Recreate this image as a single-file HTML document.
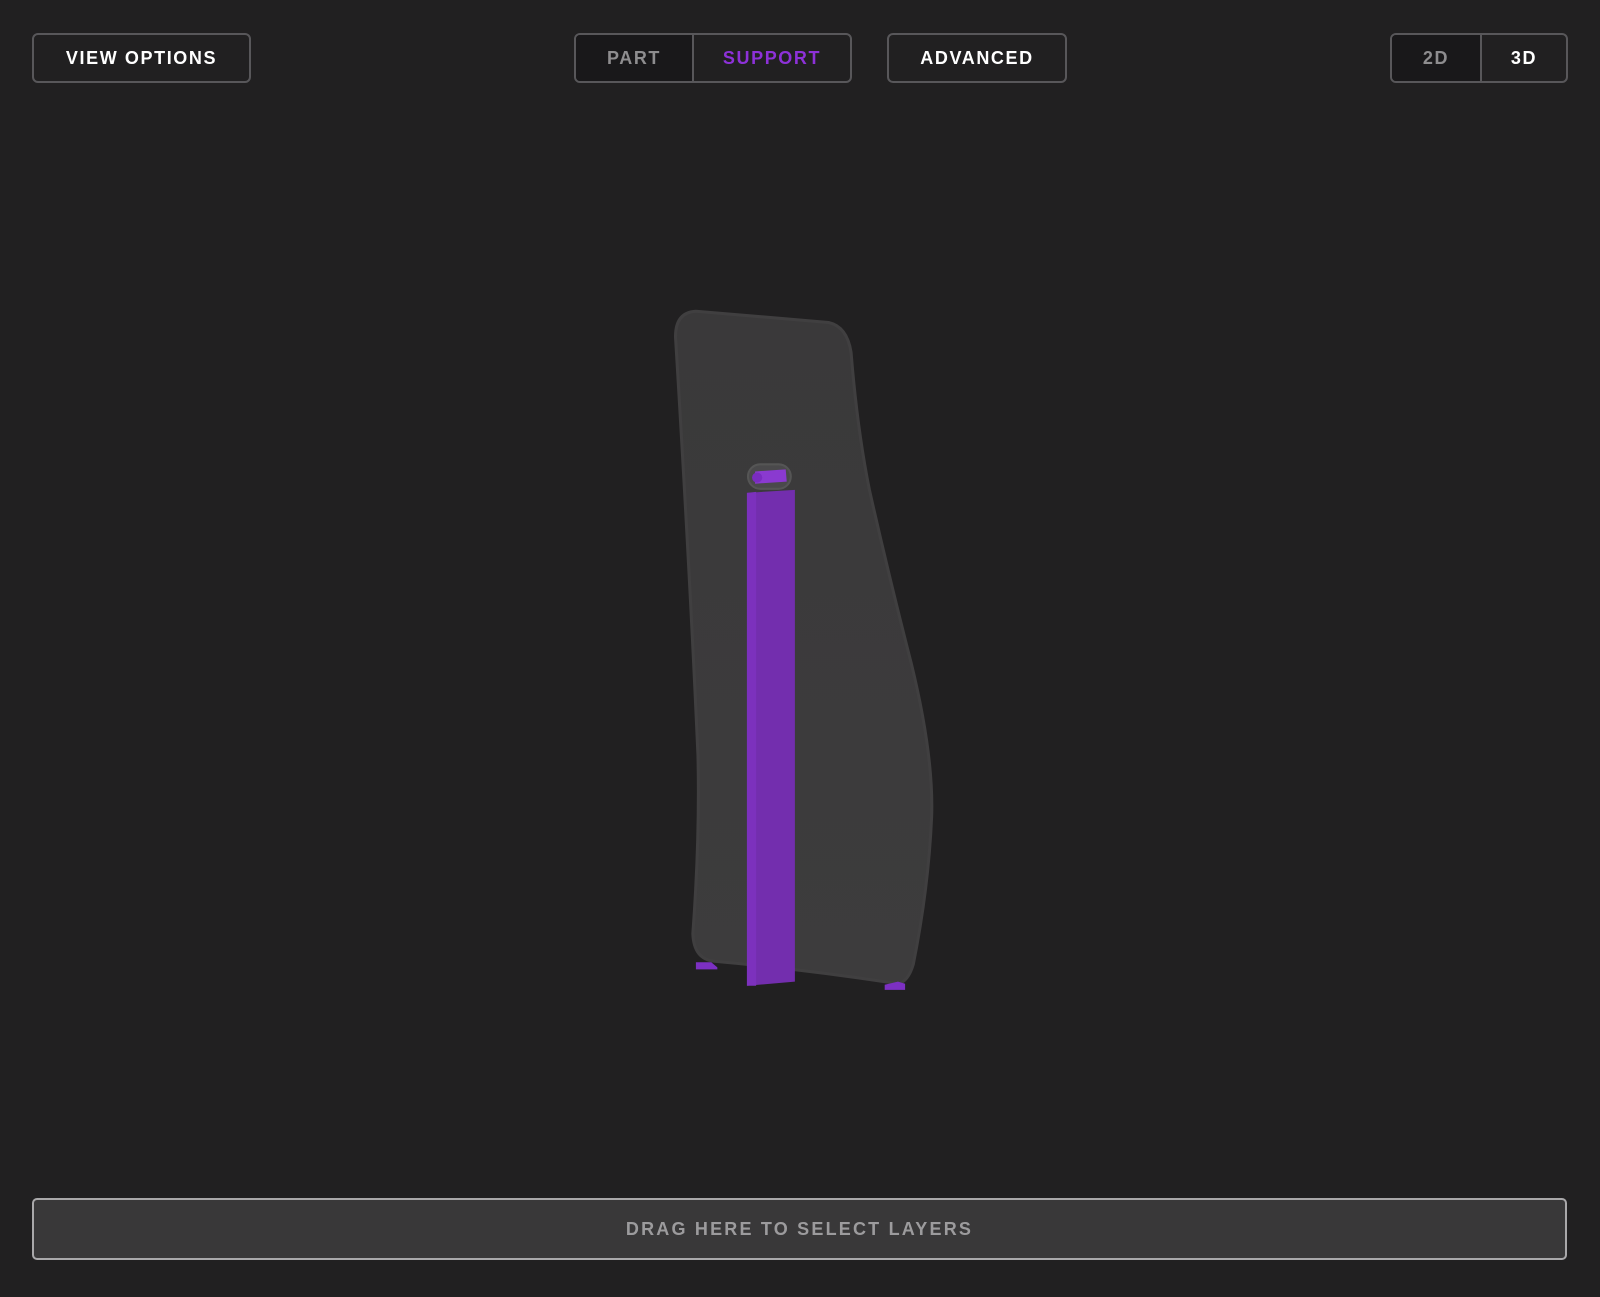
<!DOCTYPE html>
<html><head><meta charset="utf-8">
<style>
html,body{margin:0;padding:0;}
body{width:1600px;height:1297px;background:#212021;position:relative;overflow:hidden;font-family:"Liberation Sans",sans-serif;}
.btn{position:absolute;box-sizing:border-box;border:2px solid #58575a;border-radius:6px;color:#fff;font-weight:bold;font-size:18px;letter-spacing:1.6px;display:flex;align-items:center;justify-content:center;background:#212021;}
.seg{position:absolute;top:0;bottom:0;display:flex;align-items:center;justify-content:center;}
svg{position:absolute;left:0;top:0;}
.bar{position:absolute;left:32px;top:1198px;width:1535px;height:62px;box-sizing:border-box;border:2px solid #a9a8aa;border-radius:5px;background:#393839;color:#9c9b9d;font-size:18px;font-weight:bold;letter-spacing:2.2px;display:flex;align-items:center;justify-content:center;}
</style></head><body>
<div class="btn" style="left:32px;top:33px;width:219px;height:50px;">VIEW OPTIONS</div>
<div class="btn" style="left:574px;top:33px;width:278px;height:50px;overflow:hidden;">
  <div class="seg" style="left:0;width:116px;background:#19181a;color:#8e8d8f;border-right:2px solid #58575a;">PART</div>
  <div class="seg" style="left:118px;right:0;color:#8d31d8;">SUPPORT</div>
</div>
<div class="btn" style="left:887px;top:33px;width:180px;height:50px;">ADVANCED</div>
<div class="btn" style="left:1390px;top:33px;width:178px;height:50px;overflow:hidden;">
  <div class="seg" style="left:0;width:88px;background:#19181a;color:#8e8d8f;border-right:2px solid #58575a;">2D</div>
  <div class="seg" style="left:90px;right:0;color:#fff;">3D</div>
</div>
<svg width="1600" height="1297" viewBox="0 0 1568 1271" preserveAspectRatio="none">
  <defs>
    <linearGradient id="g" x1="0" y1="0" x2="0" y2="1">
      <stop offset="0" stop-color="#3a393a"/><stop offset="1" stop-color="#3d3c3d"/>
    </linearGradient>
  </defs>
  <path d="M682 305 L812 316 Q830 320 834 345 Q840 420 852 480 Q870 560 893 650 Q915 740 913 800 Q910 870 895 945 Q890 962 880 964 Q790 950 700 942 Q680 940 679 915 Q686 820 684 740 Q676 560 662 330 Q662 306 682 305 Z" fill="url(#g)" stroke="#403f40" stroke-width="3"/>
  <rect x="733" y="455" width="42" height="24" rx="12" fill="#4a494b" stroke="#555" stroke-width="2"/>
  <path d="M740 462 L770 460 L771 472 L740 474 Z" fill="#8a3ad0"/>
  <circle cx="742" cy="468" r="5" fill="#7a2cc0"/>
  <path d="M732 483 L779 480 L779 962 L732 966 Z" fill="#732eae"/>
  <path d="M732 483 L741 482 L741 966 L732 966 Z" fill="#7c31bd"/>
  <path d="M682 943 L697 943 L703 948 L703 950 L682 950 Z" fill="#7c30c2"/>
  <path d="M867 965 L880 962 L887 964 L887 970 L867 970 Z" fill="#7c30c2"/>
</svg>
<div class="bar">DRAG HERE TO SELECT LAYERS</div>
</body></html>
